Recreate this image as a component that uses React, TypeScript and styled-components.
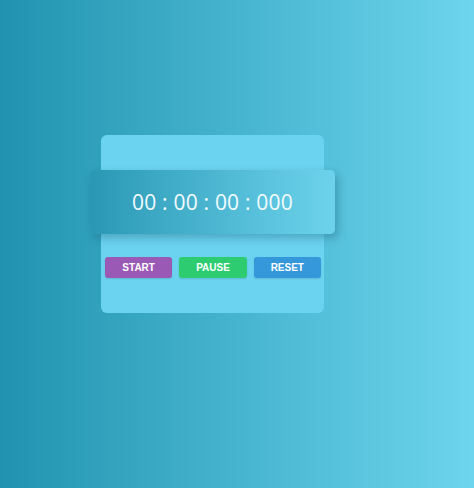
import styled, { createGlobalStyle } from "styled-components";

const GlobalStyle = createGlobalStyle`
    html, body {
        margin: 0;
        padding: 0;
    }
    body {
        font-family: "Open Sans", "Liberation Sans", sans-serif;
    }
`;

const Page = styled.div`
    min-height: 488px;
    box-sizing: border-box;
    padding: 135px 0 0 101px;
    background: linear-gradient(to right, #2193b0, #6dd5ed);
`;

const Card = styled.div`
    width: 223px;
    height: 178px;
    box-sizing: border-box;
    padding: 35px 3px 0 4px;
    background-color: #6bd3ef;
    border-radius: 6px;
    display: flex;
    flex-direction: column;
    gap: 23px;
`;

const Display = styled.div`
    margin: 0 -14px 0 -15px;
    height: 64px;
    border-radius: 5px;
    background: linear-gradient(to right, #2a98b5, #6dd3ec);
    box-shadow: 3px 4px 8px rgba(20, 80, 110, 0.35);
    display: flex;
    align-items: center;
    justify-content: center;
    color: #f2fbff;
    font-family: "Open Sans", "Liberation Sans", sans-serif;
    font-size: 21px;
    letter-spacing: 0.2px;
`;

const ButtonRow = styled.div`
    display: flex;
    gap: 7px;
`;

const Button = styled.button<{ $color: string }>`
    flex: 1;
    height: 21px;
    padding: 0;
    border: none;
    border-radius: 3px;
    background-color: ${(p) => p.$color};
    color: #fff;
    font-family: "Liberation Sans", Arial, sans-serif;
    font-weight: 700;
    font-size: 10px;
    cursor: pointer;
    box-shadow: 0 1px 2px rgba(0, 0, 0, 0.12);
`;

export default function App() {
    return (
        <Page>
            <GlobalStyle />
            <Card>
                <Display>00 : 00 : 00 : 000</Display>
                <ButtonRow>
                    <Button $color="#9b59b6">START</Button>
                    <Button $color="#2ecc71">PAUSE</Button>
                    <Button $color="#3498db">RESET</Button>
                </ButtonRow>
            </Card>
        </Page>
    );
}
